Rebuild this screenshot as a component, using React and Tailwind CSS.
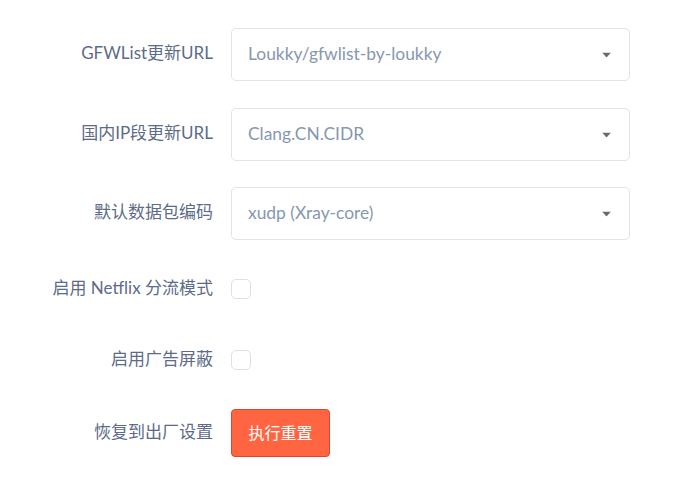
// App.jsx

const font = { fontFamily: 'Lato, "Noto Sans CJK SC", sans-serif' };

// --- Caret ---
const Caret = () => (
  <svg width="9" height="5" viewBox="0 0 9 5" className="absolute right-[18px] top-1/2 -translate-y-1/2">
    <path d="M0 0 L9 0 L4.5 5 Z" fill="#6b6b6b" />
  </svg>
);

// --- Row ---
const Row = ({ label, className, children }) => (
  <div className={`flex items-center ${className}`}>
    <label className="w-[213px] shrink-0 text-right text-[17px] text-[#5d6b89] pb-[3px]">{label}</label>
    <div className="ml-[18px]">{children}</div>
  </div>
);

const Select = ({ value }) => (
  <div className="relative w-[399px] h-[53px] border border-[#e0e3e9] rounded-[5px] bg-white flex items-center pl-4 text-[17.4px] text-[#8797b0]">
    {value}
    <Caret />
  </div>
);

const Checkbox = () => (
  <div className="w-5 h-5 border border-[#dde0e7] rounded-[5px] bg-white" />
);

// --- App ---
const App = () => (
  <div className="min-h-screen bg-white pt-[28px]" style={font}>
    <Row label="GFWList更新URL" className="h-[53px] mb-[27px]">
      <Select value="Loukky/gfwlist-by-loukky" />
    </Row>
    <Row label="国内IP段更新URL" className="h-[53px] mb-[26px]">
      <Select value="Clang.CN.CIDR" />
    </Row>
    <Row label="默认数据包编码" className="h-[53px] mb-[29px]">
      <Select value="xudp (Xray-core)" />
    </Row>
    <Row label="启用 Netflix 分流模式" className="h-[40px] mb-[31px]">
      <Checkbox />
    </Row>
    <Row label="启用广告屏蔽" className="h-[40px] mb-[29px]">
      <Checkbox />
    </Row>
    <Row label="恢复到出厂设置" className="h-[48px]">
      <button className="w-[99px] h-[48px] rounded-[4px] bg-[#ff6541] border border-[#e2452f] text-white text-[16px]">
        执行重置
      </button>
    </Row>
  </div>
);

export default App;
